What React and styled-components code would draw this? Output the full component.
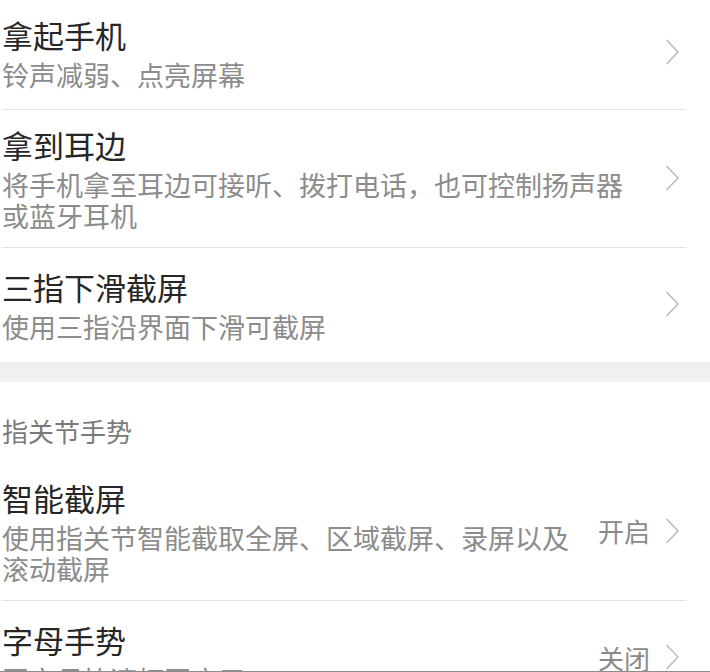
import React from "react";
import styled, { createGlobalStyle, css } from "styled-components";

const GlobalStyle = createGlobalStyle`
  body {
    margin: 0;
    background: #fff;
    font-family: "Noto Sans CJK SC", "Noto Sans", sans-serif;
  }
`;

const Screen = styled.div`
  height: 672px;
  box-sizing: border-box;
  overflow: hidden;
  border-bottom: 1px solid #8c8c8c;
  background: #fff;
`;

const List = styled.div`
  display: flex;
  flex-direction: column;
  margin-top: ${(props) => props.$offset || 0}px;
`;

const Row = styled.div`
  display: flex;
  align-items: center;
  box-sizing: border-box;
  min-height: 114px;
  margin: 0 24px 0 2px;
  padding: 14px 6px 16px 0;
  ${(props) =>
    props.$divider &&
    css`
      border-bottom: 1px solid #e4e4e4;
    `}
`;

const TextBlock = styled.div`
  flex: 1;
  min-width: 0;
  margin-right: 20px;
`;

const Title = styled.div`
  font-size: 31px;
  line-height: 42px;
  color: #262626;
`;

const Subtitle = styled.div`
  margin-top: 3px;
  font-size: 27px;
  line-height: 31px;
  color: #8c8c8c;
`;

const Value = styled.span`
  font-size: 26px;
  line-height: 31px;
  color: #8a8a8a;
  margin-right: 15px;
  white-space: nowrap;
`;

const Band = styled.div`
  height: 20px;
  background: linear-gradient(#ededed, #f3f3f3);
`;

const SectionHeader = styled.div`
  padding: 34px 0 17px 2px;
  font-size: 26px;
  line-height: 30px;
  color: #7a7a7a;
`;

const Chevron = () => (
  <svg width="15" height="26" viewBox="0 0 15 26" fill="none">
    <polyline
      points="2,1.5 13,13 2,24.5"
      stroke="#bdbdbd"
      strokeWidth="1.7"
      strokeLinecap="round"
      strokeLinejoin="round"
    />
  </svg>
);

function SettingRow({ title, subtitle, value, divider }) {
  return (
    <Row $divider={divider}>
      <TextBlock>
        <Title>{title}</Title>
        <Subtitle>{subtitle}</Subtitle>
      </TextBlock>
      {value && <Value>{value}</Value>}
      <Chevron />
    </Row>
  );
}

const motionItems = [
  { title: "拿起手机", subtitle: "铃声减弱、点亮屏幕" },
  {
    title: "拿到耳边",
    subtitle: "将手机拿至耳边可接听、拨打电话，也可控制扬声器或蓝牙耳机",
  },
  { title: "三指下滑截屏", subtitle: "使用三指沿界面下滑可截屏" },
];

const knuckleItems = [
  {
    title: "智能截屏",
    subtitle: "使用指关节智能截取全屏、区域截屏、录屏以及滚动截屏",
    value: "开启",
  },
  { title: "字母手势", subtitle: "画字母快速打开应用", value: "关闭" },
];

export default function App() {
  return (
    <Screen>
      <GlobalStyle />
      <List $offset={-4}>
        {motionItems.map((item, i) => (
          <SettingRow
            key={item.title}
            {...item}
            divider={i < motionItems.length - 1}
          />
        ))}
      </List>
      <Band />
      <SectionHeader>指关节手势</SectionHeader>
      <List>
        {knuckleItems.map((item, i) => (
          <SettingRow
            key={item.title}
            {...item}
            divider={i < knuckleItems.length - 1}
          />
        ))}
      </List>
    </Screen>
  );
}
